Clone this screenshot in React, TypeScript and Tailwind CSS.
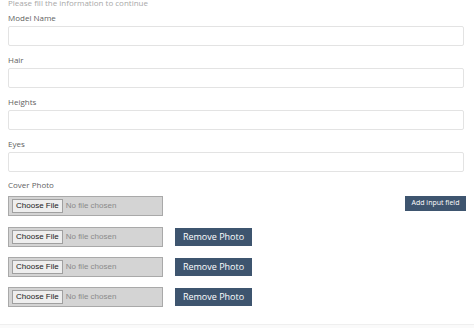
import React from "react";

const Field = ({ label }: { label: string }) => (
  <div className="flex flex-col">
    <div className="h-[14px] text-[8px] leading-[14px] text-[#5f5f5f]">{label}</div>
    <div className="mt-[1px] h-[20px] w-[456px] rounded-[2px] border border-[#e3e3e3] bg-white" />
  </div>
);

const FileBox = () => (
  <div className="flex h-[20px] w-[155px] items-center border border-[#a9a9a9] bg-[#d4d4d4] pl-[3px]">
    <div className="flex h-[14px] items-center border border-[#a0a0a0] bg-[#eeeeee] px-[3px] text-[8px] text-[#222] [font-family:'Liberation_Sans',Arial,sans-serif]">
      Choose File
    </div>
    <span className="ml-[3px] text-[8px] text-[#8a8a8a] [font-family:'Liberation_Sans',Arial,sans-serif]">No file chosen</span>
  </div>
);

const RemoveBtn = () => (
  <div className="flex h-[18px] w-[77px] items-center justify-center bg-[#3e556f] text-[9px] text-white">
    Remove Photo
  </div>
);

export default function App() {
  return (
    <div className="relative h-[328px] w-[474px] overflow-hidden bg-white [font-family:'Open_Sans',sans-serif]">
      <div className="px-[8px]">
        <div className="mt-[-3px] h-[12px] text-[8px] leading-[12px] text-[#a8a8a8]">
          Please fill the information to continue
        </div>
        <div className="mt-[2px] flex flex-col gap-[7px]">
          <Field label="Model Name" />
          <Field label="Hair" />
          <Field label="Heights" />
          <Field label="Eyes" />
        </div>
        <div className="mt-[6px] h-[14px] text-[8px] leading-[14px] text-[#5f5f5f]">Cover Photo</div>
        <div className="mt-[4px] flex items-start justify-between">
          <FileBox />
          <div className="flex h-[15px] w-[61px] items-center justify-center bg-[#3e556f] text-[7px] text-white">
            Add input field
          </div>
        </div>
        <div className="mt-[11px] flex flex-col gap-[10px]">
          {[0, 1, 2].map((i) => (
            <div key={i} className="flex items-center gap-[12px]">
              <FileBox />
              <RemoveBtn />
            </div>
          ))}
        </div>
      </div>
      <div className="absolute bottom-0 left-0 h-[4px] w-full border-t border-[#efefef] bg-[#fafafa]" />
    </div>
  );
}
